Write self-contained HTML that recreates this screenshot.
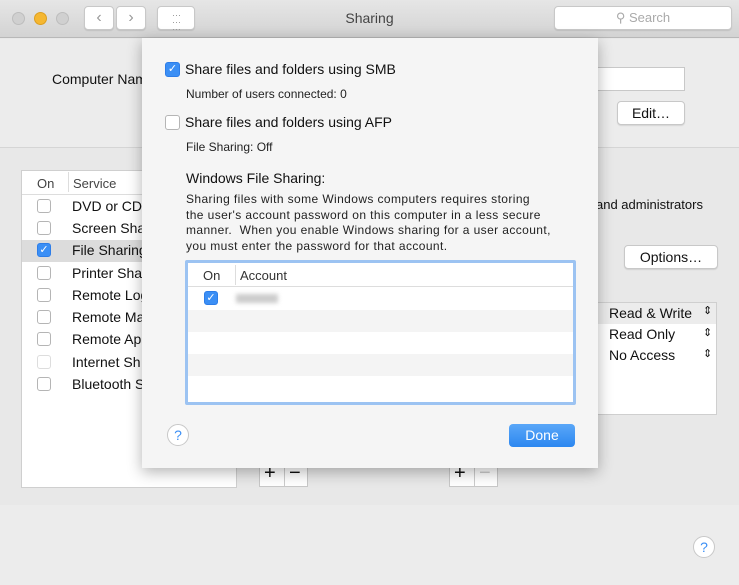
<!DOCTYPE html><html><head><style>
*{margin:0;padding:0;box-sizing:border-box}
body{width:739px;height:585px;overflow:hidden;background:#e8e8e8;font-family:"Liberation Sans",sans-serif;font-size:13px;color:#111;position:relative}
.a{position:absolute}
.cb{position:absolute;width:14px;height:14px;border:1px solid #b5b5b5;border-radius:3px;background:#fff}
.cb.on{background:#3b8ff5;border-color:#2d7de8;color:#fff;font-size:11px;line-height:12px;text-align:center}
.btn{position:absolute;background:#fff;border:1px solid #c8c8c8;border-radius:4px;box-shadow:0 1px 1px rgba(0,0,0,.1);text-align:center}
</style></head><body>
<div class="a" style="left:0;top:0;width:739px;height:38px;background:linear-gradient(#e6e6e6,#d3d3d3);border-bottom:1px solid #b8b8b8"></div>
<div class="a" style="left:12px;top:12px;width:13px;height:13px;border-radius:50%;background:#d0d0d0;border:1px solid #bdbdbd"></div>
<div class="a" style="left:34px;top:12px;width:13px;height:13px;border-radius:50%;background:#f5b731;border:1px solid #dd9f20"></div>
<div class="a" style="left:56px;top:12px;width:13px;height:13px;border-radius:50%;background:#d0d0d0;border:1px solid #bdbdbd"></div>
<div class="btn" style="left:84px;top:6px;width:30px;height:24px;color:#999;font-size:16px;line-height:21px">&#8249;</div>
<div class="btn" style="left:116px;top:6px;width:30px;height:24px;color:#999;font-size:16px;line-height:21px">&#8250;</div>
<div class="btn" style="left:157px;top:6px;width:38px;height:24px;color:#999;font-size:9px;line-height:7px;padding-top:5px;letter-spacing:-1px">&#8943;<br>&#8943;<br>&#8943;</div>
<div class="a" style="left:0;top:10px;width:739px;text-align:center;font-size:14px;color:#444">Sharing</div>
<div class="btn" style="left:554px;top:6px;width:178px;height:24px;color:#aaa;font-size:13px;line-height:22px">&#9906; Search</div>
<div class="a" style="left:0;top:39px;width:739px;height:109px;background:#ececec;border-bottom:1px solid #d5d5d5"></div>
<div class="a" style="left:52px;top:71px;font-size:14px">Computer Name:</div>
<div class="a" style="left:590px;top:67px;width:95px;height:24px;background:#fff;border:1px solid #c8c8c8"></div>
<div class="btn" style="left:617px;top:101px;width:68px;height:24px;line-height:22px;font-size:14px">Edit…</div>
<div class="a" style="left:0;top:505px;width:739px;height:80px;background:#ececec"></div>
<div class="a" style="left:21px;top:170px;width:216px;height:318px;background:#fff;border:1px solid #cfcfcf"></div>
<div class="a" style="left:22px;top:171px;width:214px;height:24px;border-bottom:1px solid #ddd;color:#444"><span class="a" style="left:15px;top:5px">On</span><span class="a" style="left:46px;top:1px;height:20px;border-left:1px solid #ddd"></span><span class="a" style="left:51px;top:5px">Service</span></div>
<div class="a" style="left:22px;top:240px;width:214px;height:22px;background:#dcdcdc"></div>
<div class="cb" style="left:37px;top:199px"></div><div class="a" style="left:72px;top:198px;font-size:14px">DVD or CD</div>
<div class="cb" style="left:37px;top:221px"></div><div class="a" style="left:72px;top:220px;font-size:14px">Screen Sha</div>
<div class="cb on" style="left:37px;top:243px">✓</div><div class="a" style="left:72px;top:242px;font-size:14px">File Sharing</div>
<div class="cb" style="left:37px;top:266px"></div><div class="a" style="left:72px;top:265px;font-size:14px">Printer Sha</div>
<div class="cb" style="left:37px;top:288px"></div><div class="a" style="left:72px;top:287px;font-size:14px">Remote Log</div>
<div class="cb" style="left:37px;top:310px"></div><div class="a" style="left:72px;top:309px;font-size:14px">Remote Ma</div>
<div class="cb" style="left:37px;top:332px"></div><div class="a" style="left:72px;top:331px;font-size:14px">Remote Ap</div>
<div class="cb" style="left:37px;top:355px;border-color:#ddd"></div><div class="a" style="left:72px;top:354px;font-size:14px">Internet Sh</div>
<div class="cb" style="left:37px;top:377px"></div><div class="a" style="left:72px;top:376px;font-size:14px">Bluetooth S</div>
<div class="a" style="left:596px;top:197px;font-size:13px">and administrators</div>
<div class="btn" style="left:624px;top:245px;width:94px;height:24px;line-height:22px;font-size:14px">Options…</div>
<div class="a" style="left:597px;top:302px;width:120px;height:113px;background:#fff;border:1px solid #cfcfcf"></div>
<div class="a" style="left:598px;top:303px;width:118px;height:21px;background:#ececec"></div>
<div class="a" style="left:609px;top:305px;font-size:14px">Read &amp; Write</div><div class="a" style="left:703px;top:304px;font-size:11px">⇕</div>
<div class="a" style="left:609px;top:326px;font-size:14px">Read Only</div><div class="a" style="left:703px;top:326px;font-size:11px">⇕</div>
<div class="a" style="left:609px;top:347px;font-size:14px">No Access</div><div class="a" style="left:703px;top:347px;font-size:11px">⇕</div>
<div class="a" style="left:259px;top:463px;width:49px;height:24px;background:#fff;border:1px solid #c8c8c8"><span class="a" style="left:4px;top:-2px;font-size:20px">+</span><span class="a" style="left:24px;top:0;height:22px;border-left:1px solid #ccc"></span><span class="a" style="left:29px;top:-2px;font-size:20px">−</span></div>
<div class="a" style="left:449px;top:463px;width:49px;height:24px;background:#fff;border:1px solid #c8c8c8"><span class="a" style="left:4px;top:-2px;font-size:20px">+</span><span class="a" style="left:24px;top:0;height:22px;border-left:1px solid #ccc"></span><span class="a" style="left:29px;top:-2px;font-size:20px;color:#ccc">−</span></div>
<div class="a" style="left:693px;top:536px;width:22px;height:22px;border-radius:50%;background:#fff;border:1px solid #c8c8c8;color:#3b8ff5;text-align:center;line-height:20px;font-size:14px">?</div>
<div class="a" style="left:142px;top:38px;width:456px;height:430px;background:#f5f5f5;box-shadow:0 4px 14px rgba(0,0,0,.3)">
<div class="cb on" style="left:23px;top:24px;width:15px;height:15px">✓</div>
<div class="a" style="left:43px;top:23px;font-size:14px">Share files and folders using SMB</div>
<div class="a" style="left:44px;top:49px;font-size:12px;color:#222">Number of users connected: 0</div>
<div class="cb" style="left:23px;top:77px;width:15px;height:15px"></div>
<div class="a" style="left:43px;top:76px;font-size:14px">Share files and folders using AFP</div>
<div class="a" style="left:44px;top:102px;font-size:12px;color:#222">File Sharing: Off</div>
<div class="a" style="left:44px;top:132px;font-size:14px">Windows File Sharing:</div>
<div class="a" style="left:44px;top:154px;font-size:12px;line-height:15.5px;color:#222;white-space:nowrap;letter-spacing:0.4px">Sharing files with some Windows computers requires storing<br>the user's account password on this computer in a less secure<br>manner.&nbsp; When you enable Windows sharing for a user account,<br>you must enter the password for that account.</div>
<div class="a" style="left:43px;top:222px;width:391px;height:145px;background:#fff;border:3px solid #9cc3f2;border-radius:2px">
<div class="a" style="left:0;top:0;width:385px;height:24px;border-bottom:1px solid #ddd;color:#333"><span class="a" style="left:15px;top:5px">On</span><span class="a" style="left:47px;top:2px;height:20px;border-left:1px solid #ddd"></span><span class="a" style="left:52px;top:5px">Account</span></div>
<div class="cb on" style="left:16px;top:28px">✓</div>
<div class="a" style="left:48px;top:31px;width:42px;height:9px;background:#ccc;filter:blur(2px)"></div>
<div class="a" style="left:0;top:47px;width:385px;height:22px;background:#f4f4f4"></div>
<div class="a" style="left:0;top:91px;width:385px;height:22px;background:#f4f4f4"></div>
</div>
<div class="a" style="left:25px;top:386px;width:22px;height:22px;border-radius:50%;background:#fff;border:1px solid #c8c8c8;color:#3b8ff5;text-align:center;line-height:20px;font-size:14px">?</div>
<div class="a" style="left:367px;top:386px;width:66px;height:23px;border-radius:4px;background:linear-gradient(#5aa7f8,#2c87f0);color:#fff;text-align:center;line-height:23px;font-size:14px">Done</div>
</div>
</body></html>
